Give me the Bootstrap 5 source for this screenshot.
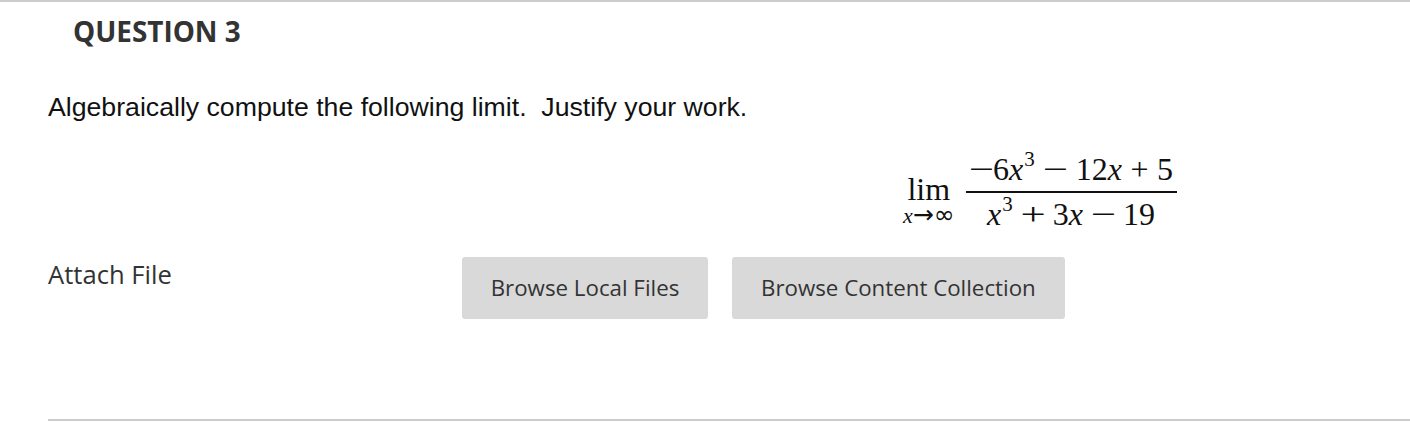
<!DOCTYPE html>
<html lang="en">
<head>
  <meta charset="UTF-8">
  <meta name="viewport" content="width=device-width, initial-scale=1.0">
  <title>Question 3</title>
  <link href="https://cdn.jsdelivr.net/npm/bootstrap@5.3.0/dist/css/bootstrap.min.css" rel="stylesheet">
  <style>
    body { font-family: "Open Sans", sans-serif; color: #333; background: #fff; overflow: hidden; }
    .top-rule { height: 2px; background: #ccc; }
    .q-title { font-family: "Open Sans", sans-serif; font-weight: 700; font-size: 27.9px; line-height: 36px; color: #333; margin: 11px 0 0 73px; }
    .q-body { padding-left: 48px; }
    .q-text { font-family: "Liberation Sans", Arial, sans-serif; font-size: 26.67px; line-height: 32px; color: #111; margin: 42px 0 0; }
    .math { font-family: "Liberation Serif", "Times New Roman", serif; font-size: 32px; color: #111; line-height: 1; margin: 30px 0 0 855px; gap: 11px; }
    .math i { font-style: italic; }
    .math sup { font-size: 21px; top: -14px; line-height: 0; vertical-align: baseline; position: relative; margin-left: 1px; }
    .mop { display: inline-block; transform: scaleX(1.4); margin: 0 3px; }
    .lim-group { padding-top: 16px; }
    .lim-word { line-height: 32px; }
    .lim-sub { font-size: 22px; line-height: 20px; white-space: nowrap; }
    .lim-arrow { font-family: "DejaVu Sans", sans-serif; font-size: 25px; }
    .frac-top { border-bottom: 2px solid #111; padding: 0 3.5px 6px; white-space: pre; word-spacing: 0.5px; }
    .frac-bottom { padding-top: 5px; white-space: pre; }
    .attach-row { margin-top: 27px; }
    .attach-label { width: 414px; font-size: 25.6px; line-height: 33px; color: #333; margin-top: 1px; }
    .browse-btn { background: #d9d9d9; border: 0; border-radius: 3px; color: #333; font-family: "Open Sans", sans-serif; font-size: 22.3px; height: 62px; padding: 0 29px; white-space: nowrap; }
    .browse-btn:hover { background: #d9d9d9; color: #333; }
    .browse-local { width: 246px; padding: 0; }
    .bottom-rule { height: 2px; background: #ccc; margin: 100px 0 0 48px; }
  </style>
</head>
<body>

<div class="top-rule"></div>
<h2 class="q-title">QUESTION 3</h2>

<div class="q-body">
  <p class="q-text">Algebraically compute the following limit.&nbsp; Justify your work.</p>

  <div class="math d-flex align-items-center">
    <div class="lim-group text-center">
      <div class="lim-word">lim</div>
      <div class="lim-sub"><i>x</i><span class="lim-arrow">→∞</span></div>
    </div>
    <div class="text-center">
      <div class="frac-top"><span class="mop">−</span>6<i>x</i><sup>3</sup> <span class="mop">−</span> 12<i>x</i> + 5</div>
      <div class="frac-bottom"><i>x</i><sup>3</sup> <span class="mop">+</span> 3<i>x</i> <span class="mop">−</span> 19</div>
    </div>
  </div>

  <div class="attach-row d-flex align-items-start">
    <div class="attach-label">Attach File</div>
    <div class="d-flex gap-4">
      <button type="button" class="btn browse-btn browse-local">Browse Local Files</button>
      <button type="button" class="btn browse-btn">Browse Content Collection</button>
    </div>
  </div>
</div>

<div class="bottom-rule"></div>

<script src="https://cdn.jsdelivr.net/npm/bootstrap@5.3.0/dist/js/bootstrap.bundle.min.js"></script>
</body>
</html>
